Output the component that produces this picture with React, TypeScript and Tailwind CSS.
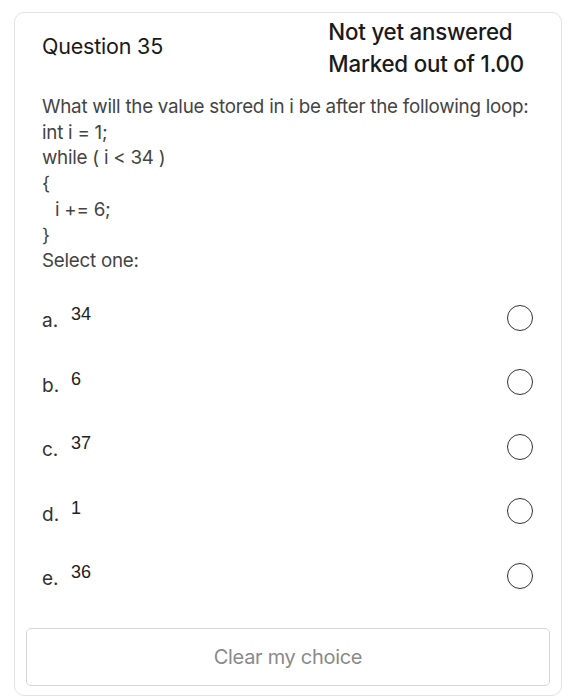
import React from 'react';

const options = [
  { letter: 'a.', value: '34' },
  { letter: 'b.', value: '6' },
  { letter: 'c.', value: '37' },
  { letter: 'd.', value: '1' },
  { letter: 'e.', value: '36' },
];

export default function App() {
  return (
    <div className="w-[576px] h-[700px] bg-white pt-[12px] px-[14px] font-['Inter',sans-serif]">
      <div className="border border-[#e3e3e3] rounded-[10px] h-[684px] pt-[3px] px-[27px]">
        {/* Header */}
        <div className="flex justify-between items-center">
          <div className="text-[21.5px] text-[#1a1a1a] tracking-[-0.2px] mb-[4px]">Question 35</div>
          <div className="text-[22.3px] font-medium text-[#1a1a1a] leading-[32px] mr-[10px] tracking-[-0.2px]">
            <div>Not yet answered</div>
            <div>Marked out of 1.00</div>
          </div>
        </div>

        {/* Question text */}
        <div className="mt-[14px] text-[18.8px] leading-[25.7px] text-[#444] tracking-[-0.25px]">
          <div>What will the value stored in i be after the following loop:</div>
          <div>int i = 1;</div>
          <div>while ( i &lt; 34 )</div>
          <div>{'{'}</div>
          <div className="pl-[13px]">i += 6;</div>
          <div>{'}'}</div>
          <div>Select one:</div>
        </div>

        {/* Options */}
        <div className="mt-[31px] flex flex-col gap-[38.5px]">
          {options.map((o) => (
            <div key={o.letter} className="flex items-center justify-between h-[26px] pr-[1px]">
              <div className="leading-[26px] whitespace-nowrap">
                <span className="inline-block w-[29px] text-[19px] text-[#333]">{o.letter}</span>
                <span className="font-['Liberation_Sans',sans-serif] text-[18px] text-[#222] align-[7px]">{o.value}</span>
              </div>
              <div className="w-[26px] h-[26px] rounded-full border-[1.5px] border-[#333]" />
            </div>
          ))}
        </div>

        {/* Clear button */}
        <div className="mt-[39px] -mx-[16px] h-[58px] border border-[#d6d6d6] rounded-[5px] flex items-center justify-center">
          <span className="text-[20px] text-[#8a8a8a] tracking-[-0.3px]">Clear my choice</span>
        </div>
      </div>
    </div>
  );
}
